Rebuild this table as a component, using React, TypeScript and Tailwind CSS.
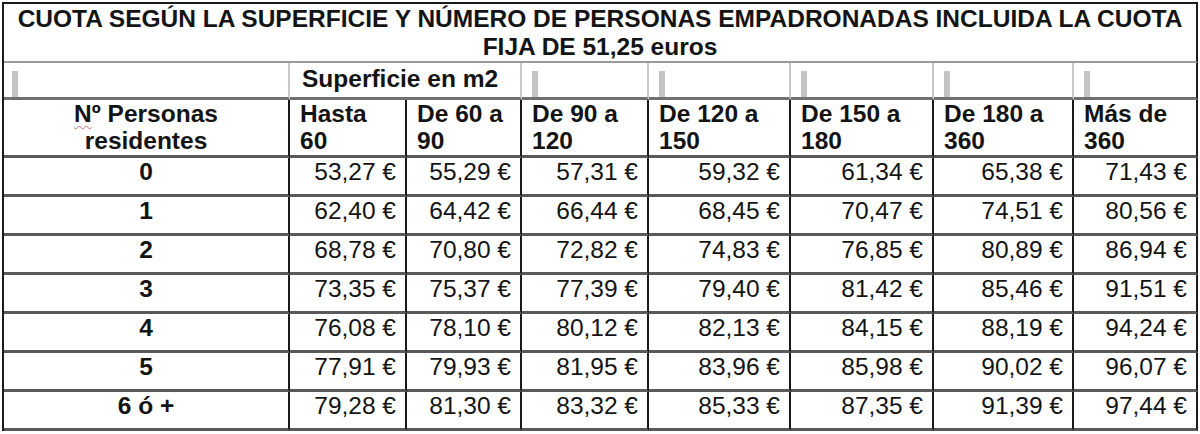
const cols = "grid-cols-[286px_117px_115px_127px_142px_143px_140px_124px]"

const ranges = [
  ["Hasta", "60"],
  ["De 60 a", "90"],
  ["De 90 a", "120"],
  ["De 120 a", "150"],
  ["De 150 a", "180"],
  ["De 180 a", "360"],
  ["Más de", "360"],
]

const rows: [string, string[]][] = [
  ["0", ["53,27", "55,29", "57,31", "59,32", "61,34", "65,38", "71,43"]],
  ["1", ["62,40", "64,42", "66,44", "68,45", "70,47", "74,51", "80,56"]],
  ["2", ["68,78", "70,80", "72,82", "74,83", "76,85", "80,89", "86,94"]],
  ["3", ["73,35", "75,37", "77,39", "79,40", "81,42", "85,46", "91,51"]],
  ["4", ["76,08", "78,10", "80,12", "82,13", "84,15", "88,19", "94,24"]],
  ["5", ["77,91", "79,93", "81,95", "83,96", "85,98", "90,02", "96,07"]],
  ["6 ó +", ["79,28", "81,30", "83,32", "85,33", "87,35", "91,39", "97,44"]],
]

function Mark() {
  return <div className="w-[6px] h-[26px] bg-[#c4c4c4]" />
}

export default function App() {
  return (
    <div className="w-[1200px] h-[434px] bg-white pl-[2px] pt-[2px] text-[#141414] font-['Liberation_Sans',Arial,sans-serif] text-[24.5px] leading-[27px]">
      <div className={`grid ${cols} w-max border-l-2 border-t-2 border-[#1a1a1a]`}>
        {/* Title */}
        <div className="col-span-8 h-[59px] border-r-2 border-r-[#1a1a1a] border-b-2 border-b-[#9a9a9a] pt-[1px] text-center font-bold leading-[28px]">
          CUOTA SEGÚN LA SUPERFICIE Y NÚMERO DE PERSONAS EMPADRONADAS INCLUIDA LA CUOTA
          <br />
          FIJA DE 51,25 euros
        </div>

        {/* Grey helper row */}
        <div className="h-[37px] flex items-end pl-[8px] border-r-2 border-r-[#c8c8c8] border-b-[3px] border-b-[#707070]">
          <Mark />
        </div>
        <div className="col-span-2 h-[37px] pl-[12px] pt-[2px] font-bold border-r-2 border-r-[#c8c8c8] border-b-[3px] border-b-[#707070]">
          Superficie en m2
        </div>
        {[0, 1, 2, 3, 4].map((i) => (
          <div
            key={i}
            className={`h-[37px] flex items-end pl-[10px] border-b-[3px] border-b-[#707070] border-r-2 ${
              i === 4 ? "border-r-[#1a1a1a]" : "border-r-[#c8c8c8]"
            }`}
          >
            <Mark />
          </div>
        ))}

        {/* Column headers */}
        <div className="h-[58px] text-center font-bold border-r-2 border-r-[#1a1a1a] border-b-[3px] border-b-[#5a5a5a]">
          <span className="underline decoration-wavy decoration-[#d46a6a] decoration-1 underline-offset-[3px]">N</span>º Personas
          <br />
          residentes
        </div>
        {ranges.map(([a, b]) => (
          <div
            key={a + b}
            className="h-[58px] pl-[10px] font-bold border-r-2 border-r-[#1a1a1a] border-b-[3px] border-b-[#5a5a5a]"
          >
            {a}
            <br />
            {b}
          </div>
        ))}

        {/* Data */}
        {rows.map(([label, values]) => (
          <div key={label} className="contents">
            <div className="h-[39px] text-center font-bold border-r-2 border-r-[#1a1a1a] border-b-[3px] border-b-[#5a5a5a]">
              {label}
            </div>
            {values.map((v, i) => (
              <div
                key={i}
                className="h-[39px] text-right pr-[9px] border-r-2 border-r-[#1a1a1a] border-b-[3px] border-b-[#5a5a5a]"
              >
                {v} €
              </div>
            ))}
          </div>
        ))}
      </div>
    </div>
  )
}
